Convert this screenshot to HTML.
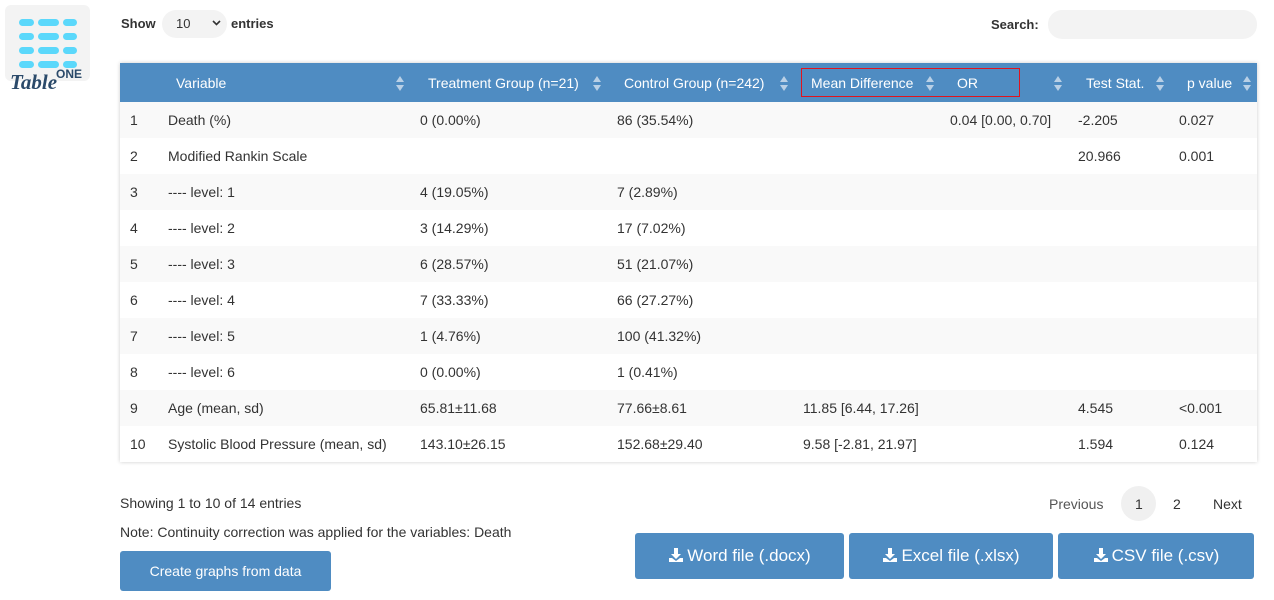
<!DOCTYPE html>
<html><head><meta charset="utf-8"><style>
body{margin:0;width:1274px;height:600px;background:#fff;font-family:"Liberation Sans",sans-serif;font-size:14px;color:#333;position:relative;overflow:hidden}
.a{position:absolute;white-space:nowrap}
.hdr{position:absolute;left:120px;top:63px;width:1137px;height:39px;background:#4f8cc2;color:#fff}
.row{position:absolute;left:120px;width:1137px;height:36px}
.btn{position:absolute;background:#4f8cc2;color:#fff;border-radius:3px;text-align:center;font-size:17px}
.btn svg{vertical-align:-2px;margin-right:3px}
.dash{position:absolute;height:7px;border-radius:4px;background:#5bd8fb}
</style></head><body>
<div class="a" style="left:5px;top:5px;width:85px;height:76px;background:#f3f3f3;border-radius:6px"></div>
<div class="dash" style="left:19px;top:19px;width:15px"></div><div class="dash" style="left:38px;top:19px;width:21px"></div><div class="dash" style="left:63px;top:19px;width:14px"></div>
<div class="dash" style="left:19px;top:33px;width:15px"></div><div class="dash" style="left:38px;top:33px;width:21px"></div><div class="dash" style="left:63px;top:33px;width:14px"></div>
<div class="dash" style="left:19px;top:47px;width:15px"></div><div class="dash" style="left:38px;top:47px;width:21px"></div><div class="dash" style="left:63px;top:47px;width:14px"></div>
<div class="dash" style="left:19px;top:61px;width:15px"></div><div class="dash" style="left:38px;top:61px;width:21px"></div><div class="dash" style="left:63px;top:61px;width:14px"></div>
<div class="a" style="left:10px;top:70px;font:italic bold 21px 'Liberation Serif',serif;color:#2b4a6a">Table</div>
<div class="a" style="left:56px;top:67px;font:bold 12px 'Liberation Sans',sans-serif;color:#2b4a6a">ONE</div>

<div class="a" style="left:121px;top:16px;font-weight:bold;font-size:13px">Show</div>
<div class="a" style="left:162px;top:10px;width:65px;height:28px;background:#f3f3f3;border-radius:14px"></div>
<div class="a" style="left:176px;top:16px;font-size:13px">10</div>
<svg class="a" style="left:212px;top:20px" width="9" height="6"><path d="M1 1l3.5 3.5L8 1" stroke="#333" stroke-width="1.6" fill="none"/></svg>
<div class="a" style="left:231px;top:16px;font-weight:bold;font-size:13px">entries</div>
<div class="a" style="left:991px;top:17px;font-weight:bold;font-size:13px">Search:</div>
<div class="a" style="left:1048px;top:10px;width:209px;height:29px;background:#f3f3f3;border-radius:14px"></div>

<div class="a" style="left:120px;top:63px;width:1137px;height:399px;box-shadow:0 0 4px rgba(0,0,0,.2)"></div>
<div class="hdr">
<span class="a" style="left:56px;top:12px">Variable</span>
<span class="a" style="left:308px;top:12px">Treatment Group (n=21)</span>
<span class="a" style="left:504px;top:12px">Control Group (n=242)</span>
<span class="a" style="left:691px;top:12px">Mean Difference</span>
<span class="a" style="left:837px;top:12px">OR</span>
<span class="a" style="left:966px;top:12px">Test Stat.</span>
<span class="a" style="left:1067px;top:12px">p value</span>
</div>
<div class="a" style="left:801px;top:68px;width:217px;height:27px;border:1.5px solid #e0141e"></div>
<svg class="a" style="left:0;top:63px" width="1274" height="39">
<g fill="#b9d0e6">
<path id="ar" d="M396 19l4-6 4 6zM396 22l4 6 4-6z"/>
<use href="#ar" x="197"/><use href="#ar" x="384"/><use href="#ar" x="530"/><use href="#ar" x="658"/><use href="#ar" x="760"/><use href="#ar" x="847"/>
</g></svg>

<div class="row" style="top:102px;background:#f9f9f9"></div>
<div class="row" style="top:174px;background:#f9f9f9"></div>
<div class="row" style="top:246px;background:#f9f9f9"></div>
<div class="row" style="top:318px;background:#f9f9f9"></div>
<div class="row" style="top:390px;background:#f9f9f9"></div>

<div class="a" style="left:130px;top:102px;line-height:36px">1<br>2<br>3<br>4<br>5<br>6<br>7<br>8<br>9<br>10</div>
<div class="a" style="left:168px;top:102px;line-height:36px">Death (%)<br>Modified Rankin Scale<br>---- level: 1<br>---- level: 2<br>---- level: 3<br>---- level: 4<br>---- level: 5<br>---- level: 6<br>Age (mean, sd)<br>Systolic Blood Pressure (mean, sd)</div>
<div class="a" style="left:420px;top:102px;line-height:36px">0 (0.00%)<br>&nbsp;<br>4 (19.05%)<br>3 (14.29%)<br>6 (28.57%)<br>7 (33.33%)<br>1 (4.76%)<br>0 (0.00%)<br>65.81±11.68<br>143.10±26.15</div>
<div class="a" style="left:617px;top:102px;line-height:36px">86 (35.54%)<br>&nbsp;<br>7 (2.89%)<br>17 (7.02%)<br>51 (21.07%)<br>66 (27.27%)<br>100 (41.32%)<br>1 (0.41%)<br>77.66±8.61<br>152.68±29.40</div>
<div class="a" style="left:803px;top:390px;line-height:36px">11.85 [6.44, 17.26]<br>9.58 [-2.81, 21.97]</div>
<div class="a" style="left:950px;top:102px;line-height:36px">0.04 [0.00, 0.70]</div>
<div class="a" style="left:1078px;top:102px;line-height:36px">-2.205<br>20.966<br>&nbsp;<br>&nbsp;<br>&nbsp;<br>&nbsp;<br>&nbsp;<br>&nbsp;<br>4.545<br>1.594</div>
<div class="a" style="left:1179px;top:102px;line-height:36px">0.027<br>0.001<br>&nbsp;<br>&nbsp;<br>&nbsp;<br>&nbsp;<br>&nbsp;<br>&nbsp;<br>&lt;0.001<br>0.124</div>

<div class="a" style="left:120px;top:495px">Showing 1 to 10 of 14 entries</div>
<div class="a" style="left:120px;top:524px">Note: Continuity correction was applied for the variables: Death</div>
<div class="btn" style="left:120px;top:551px;width:211px;height:40px;line-height:40px;font-size:14px">Create graphs from data</div>
<div class="a" style="left:1049px;top:496px;color:#555">Previous</div>
<div class="a" style="left:1121px;top:486px;width:35px;height:35px;border-radius:50%;background:#f0f0f0"></div>
<div class="a" style="left:1135px;top:496px">1</div>
<div class="a" style="left:1173px;top:496px">2</div>
<div class="a" style="left:1213px;top:496px">Next</div>

<div class="btn" style="left:635px;top:533px;width:209px;height:46px;line-height:46px"><svg width="16" height="16" viewBox="0 0 16 16"><path d="M6 1h4v6h3l-5 5-5-5h3z M1 11h3l4 3 4-3h3v4H1z" fill="#fff"/></svg>Word file (.docx)</div>
<div class="btn" style="left:849px;top:533px;width:204px;height:46px;line-height:46px"><svg width="16" height="16" viewBox="0 0 16 16"><path d="M6 1h4v6h3l-5 5-5-5h3z M1 11h3l4 3 4-3h3v4H1z" fill="#fff"/></svg>Excel file (.xlsx)</div>
<div class="btn" style="left:1058px;top:533px;width:196px;height:46px;line-height:46px"><svg width="16" height="16" viewBox="0 0 16 16"><path d="M6 1h4v6h3l-5 5-5-5h3z M1 11h3l4 3 4-3h3v4H1z" fill="#fff"/></svg>CSV file (.csv)</div>
</body></html>
